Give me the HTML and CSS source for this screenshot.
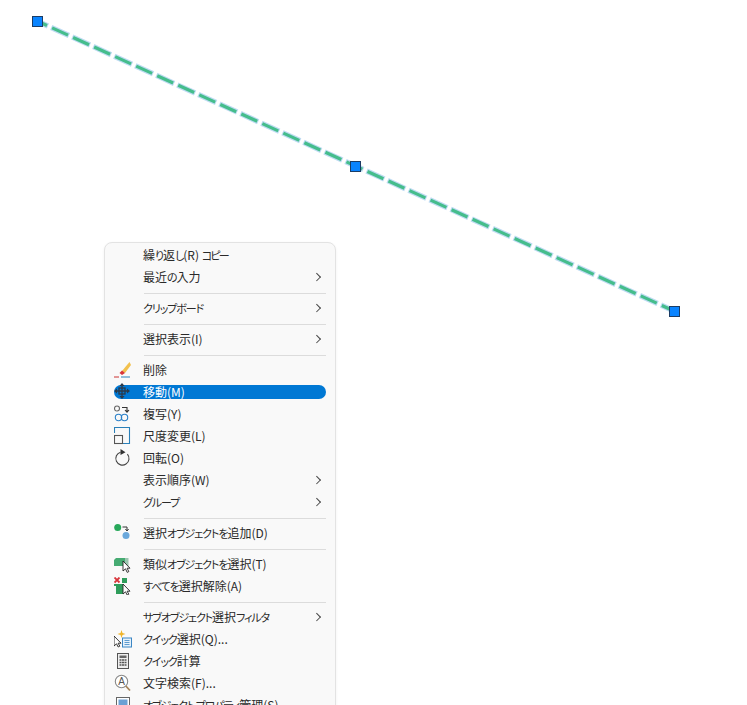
FILE: index.html
```html
<!DOCTYPE html>
<html lang="ja">
<head>
<meta charset="utf-8">
<title>Context menu</title>
<link rel="stylesheet" href="styles.css">
</head>
<body>
<svg class="canvas" width="747" height="705" viewBox="0 0 747 705">
  <line class="halo" x1="37" y1="21" x2="674" y2="311"/>
  <line class="dash" x1="37" y1="21" x2="674" y2="311"/>
  <rect class="grip" x="32.5" y="16.5" width="10" height="10"/>
  <rect class="grip" x="350.5" y="161.5" width="10" height="10"/>
  <rect class="grip" x="669.5" y="306.5" width="10" height="10"/>
</svg>
<nav class="menu">
  <div class="row"><span class="label">繰<i>り</i>返<i>し</i>(R) <i class="tight">コピー</i></span></div>
  <div class="row"><span class="label">最近<i>の</i>入力</span><span class="chev"></span></div>
  <div class="sep"></div>
  <div class="row"><span class="label"><i>クリップボード</i></span><span class="chev"></span></div>
  <div class="sep"></div>
  <div class="row"><span class="label">選択表示(I)</span><span class="chev"></span></div>
  <div class="sep"></div>
  <div class="row">
    <svg class="ico" viewBox="0 0 18 18"><path d="M8 10 15.5 1l1.5 3-6 8z" fill="#f2c14e"/><path d="M5.5 12l2.5-2.5 3 2.5-3 2z" fill="#d8343a"/><path d="M0 16h5" stroke="#c33" fill="none"/><path d="M7 16h9" stroke="#2a80b9" fill="none"/></svg>
    <span class="label">削除</span></div>
  <div class="row active">
    <svg class="ico" viewBox="0 0 18 18"><g fill="none" stroke="#2b3a4a" stroke-width="1.3"><path d="M8 2v12M1.5 8h13"/><rect x="5" y="5" width="6" height="6"/></g><path d="M8 0l2.6 3H5.4zM8 16l-2.6-3h5.2zM0 8l3-2.6v5.2zM16 8l-3 2.6V5.4z" fill="#2b3a4a"/></svg>
    <span class="label">移動(M)</span></div>
  <div class="row">
    <svg class="ico" viewBox="0 0 18 18"><g fill="none" stroke-width="1.1"><circle cx="3" cy="3.5" r="2.5" stroke="#666"/><path d="M8 2.5h5v4M11 5l2 2.2L15 5" stroke="#333"/><circle cx="4.5" cy="12.5" r="3.2" stroke="#2a80c9"/><circle cx="10.5" cy="12.5" r="3.2" stroke="#2a80c9"/></g></svg>
    <span class="label">複写(Y)</span></div>
  <div class="row">
    <svg class="ico" viewBox="0 0 18 18"><g fill="none"><path d="M.5 6V.5h15V16.5H9" stroke="#2a80b9" stroke-width="1.1"/><rect x=".5" y="8.5" width="8" height="8" stroke="#555" stroke-width="1.1"/></g></svg>
    <span class="label">尺度変更(L)</span></div>
  <div class="row">
    <svg class="ico" viewBox="0 0 18 18"><path d="M6.5 3.2a6.6 6.6 0 1 0 6.9 2" fill="none" stroke="#444" stroke-width="1.1"/><path d="M6.5 0l5 3.2-5 2.8z" fill="#333"/></svg>
    <span class="label">回転(O)</span></div>
  <div class="row"><span class="label">表示順序(W)</span><span class="chev"></span></div>
  <div class="row"><span class="label"><i>グループ</i></span><span class="chev"></span></div>
  <div class="sep"></div>
  <div class="row">
    <svg class="ico" viewBox="0 0 18 18"><circle cx="3.7" cy="3.5" r="3.5" fill="#27a85a"/><circle cx="12" cy="11.5" r="3.5" fill="#6aa8dc"/><path d="M8.5 3h4.5v3.5M11.4 5l1.6 2 1.6-2" fill="none" stroke="#333"/></svg>
    <span class="label">選択<i>オブジェクトを</i>追加(D)</span></div>
  <div class="sep"></div>
  <div class="row">
    <svg class="ico" viewBox="0 0 18 18"><path d="M2 3h9v8H0V5z" fill="#46ab72"/><path d="M11 3h3.5v8H11z" fill="#9cc6b0"/><path d="M9 6v10l2.5-2.2 1.7 3.6 1.6-.8-1.7-3.4H16z" fill="#fff" stroke="#222" stroke-width=".9"/></svg>
    <span class="label">類似<i>オブジェクトを</i>選択(T)</span></div>
  <div class="row">
    <svg class="ico" viewBox="0 0 18 18"><path d="M.5.5l5 5M5.5.5l-5 5" stroke="#d8343a" stroke-width="1.8" fill="none"/><path d="M2 7h7v10H2zM8 1h5v5H8zM0 7h2v2H0z" fill="#2f9d5b"/><path d="M9 7v10l2.5-2.2 1.7 3.2 1.6-.8-1.7-3H16z" fill="#fff" stroke="#222" stroke-width=".9"/></svg>
    <span class="label"><i>すべてを</i>選択解除(A)</span></div>
  <div class="sep"></div>
  <div class="row"><span class="label"><i>サブオブジェクト</i>選択<i>フィルタ</i></span><span class="chev"></span></div>
  <div class="row">
    <svg class="ico" viewBox="0 0 18 18"><path d="M7.5 0l1 3 3 1-3 1-1 3-1-3-3-1 3-1z" fill="#f0b429"/><path d="M0 6v10l2.5-2.2 1.7 3.2 1.6-.8-1.7-3H7z" fill="#fff" stroke="#222" stroke-width=".9"/><rect x="8.5" y="8" width="9" height="9" fill="#e6f1fa" stroke="#3b86c4"/><path d="M10.5 10.5h5M10.5 12.5h5M10.5 14.5h5" stroke="#3b86c4" stroke-width=".8"/></svg>
    <span class="label"><i>クイック</i>選択(Q)...</span></div>
  <div class="row">
    <svg class="ico" viewBox="0 0 18 18"><rect x="3.5" y="1.5" width="11" height="15" fill="#eee" stroke="#555"/><rect x="5.5" y="3.5" width="7" height="2.5" fill="#666"/><path d="M5.5 8h2M8 8h2M10.5 8h2M5.5 10.5h2M8 10.5h2M10.5 10.5h2M5.5 13h2M8 13h2M10.5 13h2" stroke="#555" stroke-width="1.5"/></svg>
    <span class="label"><i>クイック</i>計算</span></div>
  <div class="row">
    <svg class="ico" viewBox="0 0 18 18"><circle cx="7.5" cy="7.5" r="6.2" fill="#fff" stroke="#888" stroke-width="1.1"/><path d="M11.8 12 16 16.5" stroke="#a5845a" stroke-width="1.8"/><text class="glyph" x="7.5" y="11">A</text></svg>
    <span class="label">文字検索(F)...</span></div>
  <div class="row">
    <svg class="ico" viewBox="0 0 18 18"><rect x="2.5" y="1.5" width="13" height="15" fill="#fff" stroke="#666"/><rect x="4.5" y="3.5" width="9" height="9" fill="#6aa0d4"/></svg>
    <span class="label"><i>オブジェクト プロパティ</i>管理(S)</span></div>
</nav>
</body>
</html>
```
FILE: styles.css
```css
html, body {
  margin: 0;
  height: 705px;
  overflow: hidden;
  background: #fff;
}
body {
  position: relative;
  font-family: "Noto Sans CJK JP", "Noto Sans", sans-serif;
}
.canvas {
  position: absolute;
  left: 0;
  top: 0;
}
.halo {
  stroke: #a9cfee;
  stroke-width: 5.5;
  stroke-dasharray: 19.5 3.6;
  stroke-dashoffset: 7.5;
  filter: blur(.6px);
  opacity: .75;
}
.dash {
  stroke: #45bd8c;
  stroke-width: 3.2;
  stroke-dasharray: 17.5 5.6;
  stroke-dashoffset: 6.5;
  filter: blur(.4px);
}
.grip {
  fill: #0a84ff;
  stroke: #1c3d66;
  stroke-width: 1;
}
.menu {
  position: absolute;
  left: 104px;
  top: 242px;
  width: 232px;
  height: 480px;
  box-sizing: border-box;
  padding: 1px 9px 0;
  background: #f9f9f9;
  border: 1px solid #e3e3e3;
  border-radius: 8px;
  box-shadow: 0 1px 3px rgba(0, 0, 0, .06);
}
.row {
  position: relative;
  display: flex;
  align-items: center;
  height: 22px;
  padding-left: 29px;
  font-size: 12px;
  font-feature-settings: "palt";
  color: #2a2a2a;
}
.label {
  position: relative;
  white-space: nowrap;
  line-height: 22px;
}
.label i {
  font-style: normal;
  font-size: 11px;
  letter-spacing: -1.1px;
}
.label i.tight {
  letter-spacing: -1.8px;
}
.row.active {
  color: #fff;
}
.row.active::before {
  content: "";
  position: absolute;
  left: 0;
  right: 0;
  top: 4px;
  height: 14px;
  border-radius: 7px;
  background: #0078d4;
}
.ico {
  position: absolute;
  left: 0;
  top: 2px;
  width: 18px;
  height: 18px;
}
.glyph {
  font-family: "Liberation Sans", sans-serif;
  font-size: 10px;
  fill: #555;
  text-anchor: middle;
}
.chev {
  position: absolute;
  right: 7px;
  top: 8px;
  width: 4.5px;
  height: 4.5px;
  border-top: 1.2px solid #444;
  border-right: 1.2px solid #444;
  transform: rotate(45deg);
}
.sep {
  height: 1px;
  margin: 5px 0 3px 30px;
  background: #dcdcdc;
}
```
